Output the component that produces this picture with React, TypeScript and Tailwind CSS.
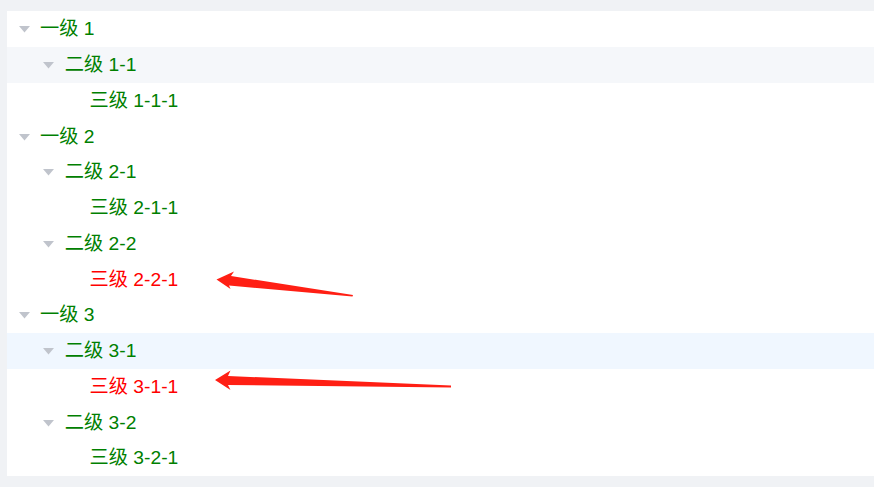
import React from "react";

type Node = { label: string; level: 1 | 2 | 3; expandable: boolean; red?: boolean; bg?: string };

const rows: Node[] = [
  { label: "一级 1", level: 1, expandable: true },
  { label: "二级 1-1", level: 2, expandable: true, bg: "hover" },
  { label: "三级 1-1-1", level: 3, expandable: false },
  { label: "一级 2", level: 1, expandable: true },
  { label: "二级 2-1", level: 2, expandable: true },
  { label: "三级 2-1-1", level: 3, expandable: false },
  { label: "二级 2-2", level: 2, expandable: true },
  { label: "三级 2-2-1", level: 3, expandable: false, red: true },
  { label: "一级 3", level: 1, expandable: true },
  { label: "二级 3-1", level: 2, expandable: true, bg: "current" },
  { label: "三级 3-1-1", level: 3, expandable: false, red: true },
  { label: "二级 3-2", level: 2, expandable: true },
  { label: "三级 3-2-1", level: 3, expandable: false },
];

const padClass: Record<number, string> = {
  1: "pl-0",
  2: "pl-[24.75px]",
  3: "pl-[49.5px]",
};

function Caret() {
  return (
    <svg width="11" height="7" viewBox="0 0 11 7" className="mt-[2px]">
      <polygon points="0,0 11,0 5.5,6.5" fill="#c0c4cc" />
    </svg>
  );
}

export default function App() {
  return (
    <div className="relative w-[874px] h-[487px] bg-[#f0f2f5] pt-[11px] pl-[7px] overflow-hidden">
      <div className="bg-white w-full">
        {rows.map((r, i) => (
          <div
            key={i}
            className={
              "flex items-center h-[35.75px] " +
              padClass[r.level] +
              (r.bg === "hover" ? " bg-[#f5f7fa]" : r.bg === "current" ? " bg-[#f0f7ff]" : "")
            }
          >
            <div className="w-[33px] flex justify-center items-center shrink-0 pl-[1px]">
              {r.expandable ? <Caret /> : null}
            </div>
            <span
              className={
                "text-[19.25px] leading-none " + (r.red ? "text-[#ff0000]" : "text-[#008000]")
              }
              style={{ fontFamily: '"Liberation Sans", "Noto Sans CJK SC", sans-serif' }}
            >
              {r.label}
            </span>
          </div>
        ))}
      </div>
      <svg
        className="absolute inset-0 pointer-events-none"
        width="874"
        height="487"
        viewBox="0 0 874 487"
      >
        <polygon
          points="216.5,279.5 234,271.5 231,276 353,295 352.5,296.5 229,285.5 230.5,289"
          fill="#ff1f14"
        />
        <polygon
          points="215,380 230.5,370.5 228,376 451,385.5 451,387.5 228,385 230.5,390"
          fill="#ff1f14"
        />
      </svg>
    </div>
  );
}
